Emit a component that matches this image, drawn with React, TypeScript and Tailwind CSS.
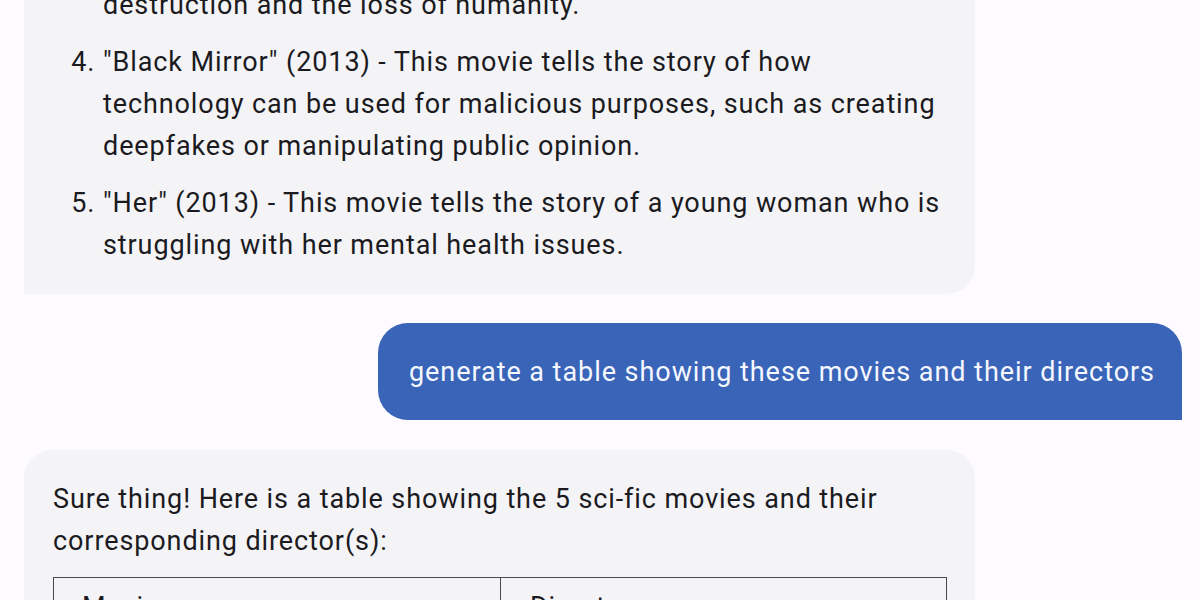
export default function App() {
  return (
    <div className="h-[600px] overflow-hidden bg-[#fdfbff] font-['Roboto',sans-serif] text-[27px] leading-[42px] tracking-[0.9px] text-[#1b1b1f]">
      <div className="flex flex-col">
        {/* Assistant message (continued from above) */}
        <div className="-mt-[16px] ml-6 w-[951px] rounded-br-[28px] bg-[#f4f4f6] pl-[29px] pr-[20px] pb-[28px]">
          <p className="pl-[50px]">destruction and the loss of humanity.</p>
          <ol start={4} className="list-decimal pl-[50px]">
            <li className="mt-[15px]">
              "Black Mirror" (2013) - This movie tells the story of how
              <br />
              technology can be used for malicious purposes, such as creating
              <br />
              deepfakes or manipulating public opinion.
            </li>
            <li className="mt-[15px]">
              "Her" (2013) - This movie tells the story of a young woman who is
              <br />
              struggling with her mental health issues.
            </li>
          </ol>
        </div>

        {/* User message */}
        <div className="mt-[29px] mr-[18px] self-end rounded-l-[30px] rounded-tr-[30px] bg-[#3964b8] pl-[31px] pr-[27px] pt-[28px] pb-[27px] tracking-[0.95px] text-[#f5f7ff]">
          generate a table showing these movies and their directors
        </div>

        {/* Assistant reply */}
        <div className="mt-[30px] ml-6 w-[951px] rounded-t-[28px] bg-[#f4f4f6] pt-[28px] pl-[29px] pr-[28px] pb-8">
          <p>
            Sure thing! Here is a table showing the 5 sci-fic movies and their
            <br />
            corresponding director(s):
          </p>
          <div className="mt-[15px] grid grid-cols-[447px_1fr] border border-[#4a4a52]">
            <div className="border-r border-[#4a4a52] px-[28px] pt-[8px] pb-4">Movie</div>
            <div className="px-[29px] pt-[8px] pb-4">Director</div>
          </div>
        </div>
      </div>
    </div>
  );
}
